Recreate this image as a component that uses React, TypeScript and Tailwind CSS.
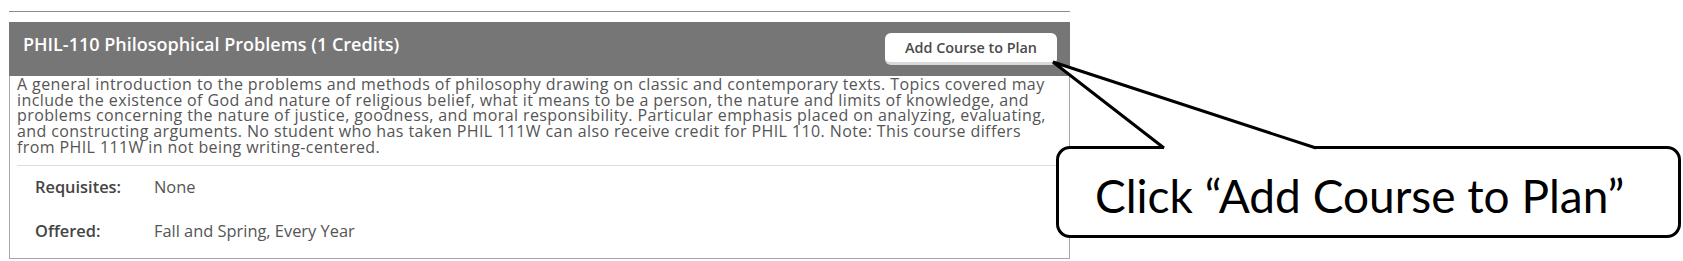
export default function App() {
  const lines = [
    "A general introduction to the problems and methods of philosophy drawing on classic and contemporary texts. Topics covered may",
    "include the existence of God and nature of religious belief, what it means to be a person, the nature and limits of knowledge, and",
    "problems concerning the nature of justice, goodness, and moral responsibility. Particular emphasis placed on analyzing, evaluating,",
    "and constructing arguments. No student who has taken PHIL 111W can also receive credit for PHIL 110. Note: This course differs",
    "from PHIL 111W in not being writing-centered.",
  ];

  return (
    <div className="relative w-[1683px] h-[261px] bg-white overflow-hidden font-['Open_Sans',sans-serif]">
      <div className="ml-[9px] w-[1061px] pt-[11px]">
        <div className="h-px bg-[#8c8c8c]" />

        <div className="mt-[10px]">
          <div className="h-[54px] bg-[#767676] flex justify-between items-start pl-[14px] pr-[13px]">
            <h2 className="pt-[10px] text-[18px] leading-[24px] font-semibold text-white">
              PHIL-110 Philosophical Problems (1 Credits)
            </h2>
            <button className="mt-[11px] h-[32px] w-[172px] rounded-[6px] bg-white border-b-[3px] border-[#d9d9d9] text-[14.4px] font-semibold text-[#4a4a4a]">
              Add Course to Plan
            </button>
          </div>

          <div className="border-x border-b border-[#a6a6a6] pb-[4px]">
            <p className="px-[7px] pt-[1px] text-[16px] leading-[15.7px] tracking-[0.4px] text-[#555555] whitespace-nowrap">
              {lines.map((l, i) => (
                <span key={i} className="block">
                  {l}
                </span>
              ))}
            </p>
            <div className="mx-[7px] mt-[9px] h-px bg-[#dddddd]" />
            <div className="pl-[25px] text-[16.4px] text-[#555555]">
              <div className="h-[44px] flex items-center">
                <span className="w-[119px] font-semibold text-[#444444]">Requisites:</span>
                <span>None</span>
              </div>
              <div className="h-[44px] flex items-center">
                <span className="w-[119px] font-semibold text-[#444444]">Offered:</span>
                <span>Fall and Spring, Every Year</span>
              </div>
            </div>
          </div>
        </div>
      </div>

      <div className="absolute left-[1056px] top-[146px] w-[625px] h-[92px] rounded-[14px] border-[3px] border-black bg-white pl-[36px] pt-[19px]">
        <span className="text-[46px] leading-[56px] text-black font-['Lato',sans-serif]">
          Click “Add Course to Plan”
        </span>
      </div>

      <svg className="absolute left-0 top-0 pointer-events-none" width="1683" height="261">
        <polygon points="1053,62 1164,147 1164,151 1314,151 1314,147" fill="white" />
        <polyline
          points="1164,148 1053,62 1316,148"
          fill="none"
          stroke="black"
          strokeWidth="3"
          strokeLinejoin="miter"
        />
      </svg>
    </div>
  );
}
